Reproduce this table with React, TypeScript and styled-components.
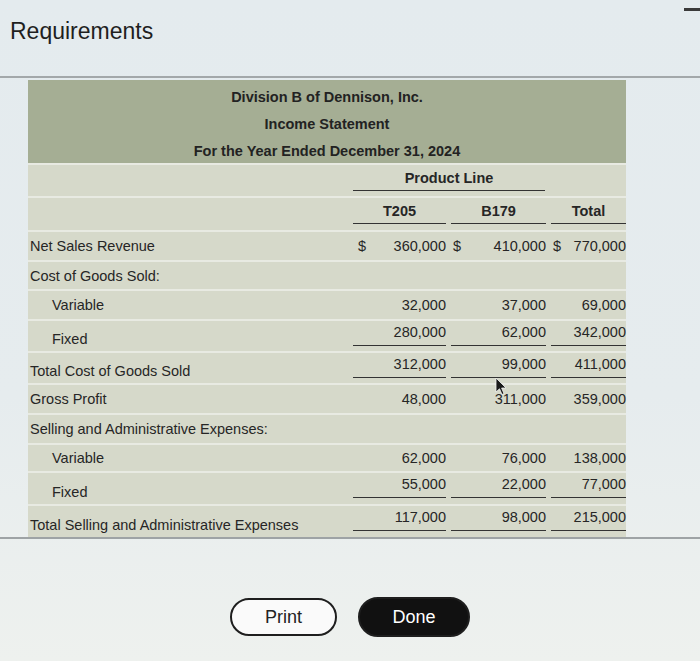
import React from "react";
import styled, { createGlobalStyle } from "styled-components";

const GlobalStyle = createGlobalStyle`
  body {
    margin: 0;
    background: #e3eaed;
    font-family: "Liberation Sans", Arial, sans-serif;
    color: #262626;
  }
`;

const Page = styled.div`
  position: relative;
  width: 700px;
  height: 661px;
  overflow: hidden;
  background: linear-gradient(180deg, #e4ebee 0%, #e6ecee 60%, #eef1ee 100%);
`;

const TitleBar = styled.div`
  height: 78px;
  border-bottom: 2px solid #a3a8aa;
  box-sizing: border-box;
  padding: 17px 0 0 10px;
`;

const Title = styled.h1`
  margin: 0;
  font-size: 23px;
  line-height: 28px;
  font-weight: 400;
  color: #1f1f1f;
`;

const CloseMark = styled.span`
  position: absolute;
  top: 8px;
  right: 0;
  width: 16px;
  height: 3px;
  background: #3a3a3a;
`;

const Content = styled.div`
  padding: 2px 0 0 28px;
  height: 461px;
  box-sizing: border-box;
  border-bottom: 2px solid #9ea3a5;
`;

const Statement = styled.div`
  width: 598px;
  background: #d6d9ca;
`;

const Heading = styled.div`
  background: #a5ae94;
  height: 83px;
  padding-top: 4px;
  box-sizing: border-box;
  text-align: center;
`;

const HeadingLine = styled.div`
  font-size: 14.5px;
  font-weight: 700;
  line-height: 27px;
  color: #222;
`;

const Row = styled.div<{ $h: number }>`
  display: grid;
  grid-template-columns: 325px 93px 100px 80px;
  height: ${(p) => p.$h}px;
  border-top: 2px solid rgba(255, 255, 255, 0.45);
  box-sizing: border-box;
  font-size: 14.5px;
  line-height: 16px;
`;

const Label = styled.div<{ $indent?: boolean; $low?: boolean }>`
  display: flex;
  align-items: ${(p) => (p.$low ? "flex-end" : "center")};
  padding-left: ${(p) => (p.$indent ? 24 : 2)}px;
  padding-bottom: ${(p) => (p.$low ? 4 : 0)}px;
`;

const Cell = styled.div<{ $gap: number; $top: number }>`
  display: flex;
  flex-direction: column;
  justify-content: ${(p) => (p.$top ? "flex-start" : "center")};
  padding-top: ${(p) => p.$top}px;
  margin-left: ${(p) => p.$gap}px;
`;

const Amount = styled.div<{ $line?: boolean; $pad: number }>`
  display: flex;
  justify-content: space-between;
  padding-left: ${(p) => p.$pad}px;
  padding-bottom: ${(p) => (p.$line ? 5 : 0)}px;
  border-bottom: ${(p) => (p.$line ? "1.5px solid #333" : "none")};
`;

const ColHead = styled.div<{ $gap: number; $span?: number }>`
  grid-column: ${(p) => (p.$span ? `span ${p.$span}` : "auto")};
  margin-left: ${(p) => p.$gap}px;
  margin-right: ${(p) => (p.$span ? 1 : 0)}px;
  padding-top: 5px;
  align-self: start;
  text-align: center;
  font-weight: 700;
  padding-bottom: 4px;
  border-bottom: 1.5px solid #333;
`;

const Footer = styled.div`
  display: flex;
  justify-content: center;
  gap: 21px;
  padding: 59px 0 0 0;
`;

const Button = styled.button<{ $dark?: boolean }>`
  width: ${(p) => (p.$dark ? 112 : 107)}px;
  height: ${(p) => (p.$dark ? 40 : 38)}px;
  margin-top: ${(p) => (p.$dark ? -1 : 0)}px;
  border-radius: 20px;
  border: 2px solid #1e1e1e;
  background: ${(p) => (p.$dark ? "#111" : "#fafafa")};
  color: ${(p) => (p.$dark ? "#fff" : "#222")};
  font-family: "Liberation Sans", Arial, sans-serif;
  font-size: 18px;
  cursor: pointer;
`;

const Pointer = styled.svg`
  position: absolute;
  left: 495px;
  top: 377px;
`;

type Line = {
  label: string;
  indent?: boolean;
  h: number;
  values?: string[];
  dollars?: boolean;
  underline?: boolean;
  split?: boolean;
};

const lines: Line[] = [
  { label: "Net Sales Revenue", h: 30, values: ["360,000", "410,000", "770,000"], dollars: true },
  { label: "Cost of Goods Sold:", h: 29 },
  { label: "Variable", indent: true, h: 30, values: ["32,000", "37,000", "69,000"] },
  { label: "Fixed", indent: true, h: 32, values: ["280,000", "62,000", "342,000"], underline: true, split: true },
  { label: "Total Cost of Goods Sold", h: 32, values: ["312,000", "99,000", "411,000"], underline: true, split: true },
  { label: "Gross Profit", h: 30, values: ["48,000", "311,000", "359,000"] },
  { label: "Selling and Administrative Expenses:", h: 30 },
  { label: "Variable", indent: true, h: 28, values: ["62,000", "76,000", "138,000"] },
  { label: "Fixed", indent: true, h: 33, values: ["55,000", "22,000", "77,000"], underline: true, split: true },
  { label: "Total Selling and Administrative Expenses", h: 33, values: ["117,000", "98,000", "215,000"], underline: true, split: true },
];

const gaps = [0, 5, 5];

const App = () => {
  return (
    <Page>
      <GlobalStyle />
      <TitleBar>
        <Title>Requirements</Title>
      </TitleBar>
      <CloseMark />
      <Content>
        <Statement>
          <Heading>
            <HeadingLine>Division B of Dennison, Inc.</HeadingLine>
            <HeadingLine>Income Statement</HeadingLine>
            <HeadingLine>For the Year Ended December 31, 2024</HeadingLine>
          </Heading>
          <Row $h={33}>
            <div />
            <ColHead $gap={0} $span={2}>Product Line</ColHead>
          </Row>
          <Row $h={34}>
            <div />
            <ColHead $gap={0}>T205</ColHead>
            <ColHead $gap={5}>B179</ColHead>
            <ColHead $gap={5}>Total</ColHead>
          </Row>
          {lines.map((line, i) => (
            <Row key={i} $h={line.h}>
              <Label $indent={line.indent} $low={line.split}>
                {line.label}
              </Label>
              {line.values?.map((v, j) => (
                <Cell key={j} $gap={gaps[j]} $top={line.split ? 3 : 0}>
                  <Amount $line={line.underline} $pad={j === 0 ? 5 : 2}>
                    <span>{line.dollars ? "$" : ""}</span>
                    <span>{v}</span>
                  </Amount>
                </Cell>
              ))}
            </Row>
          ))}
        </Statement>
      </Content>
      <Footer>
        <Button>Print</Button>
        <Button $dark>Done</Button>
      </Footer>
      <Pointer width="12" height="19" viewBox="0 0 12 19">
        <path d="M1 1 L1 15 L4.5 11.8 L7 17.5 L9 16.6 L6.6 11 L11 11 Z" fill="#1a1a1a" stroke="#f2f2f2" strokeWidth="0.8" />
      </Pointer>
    </Page>
  );
};

export default App;
